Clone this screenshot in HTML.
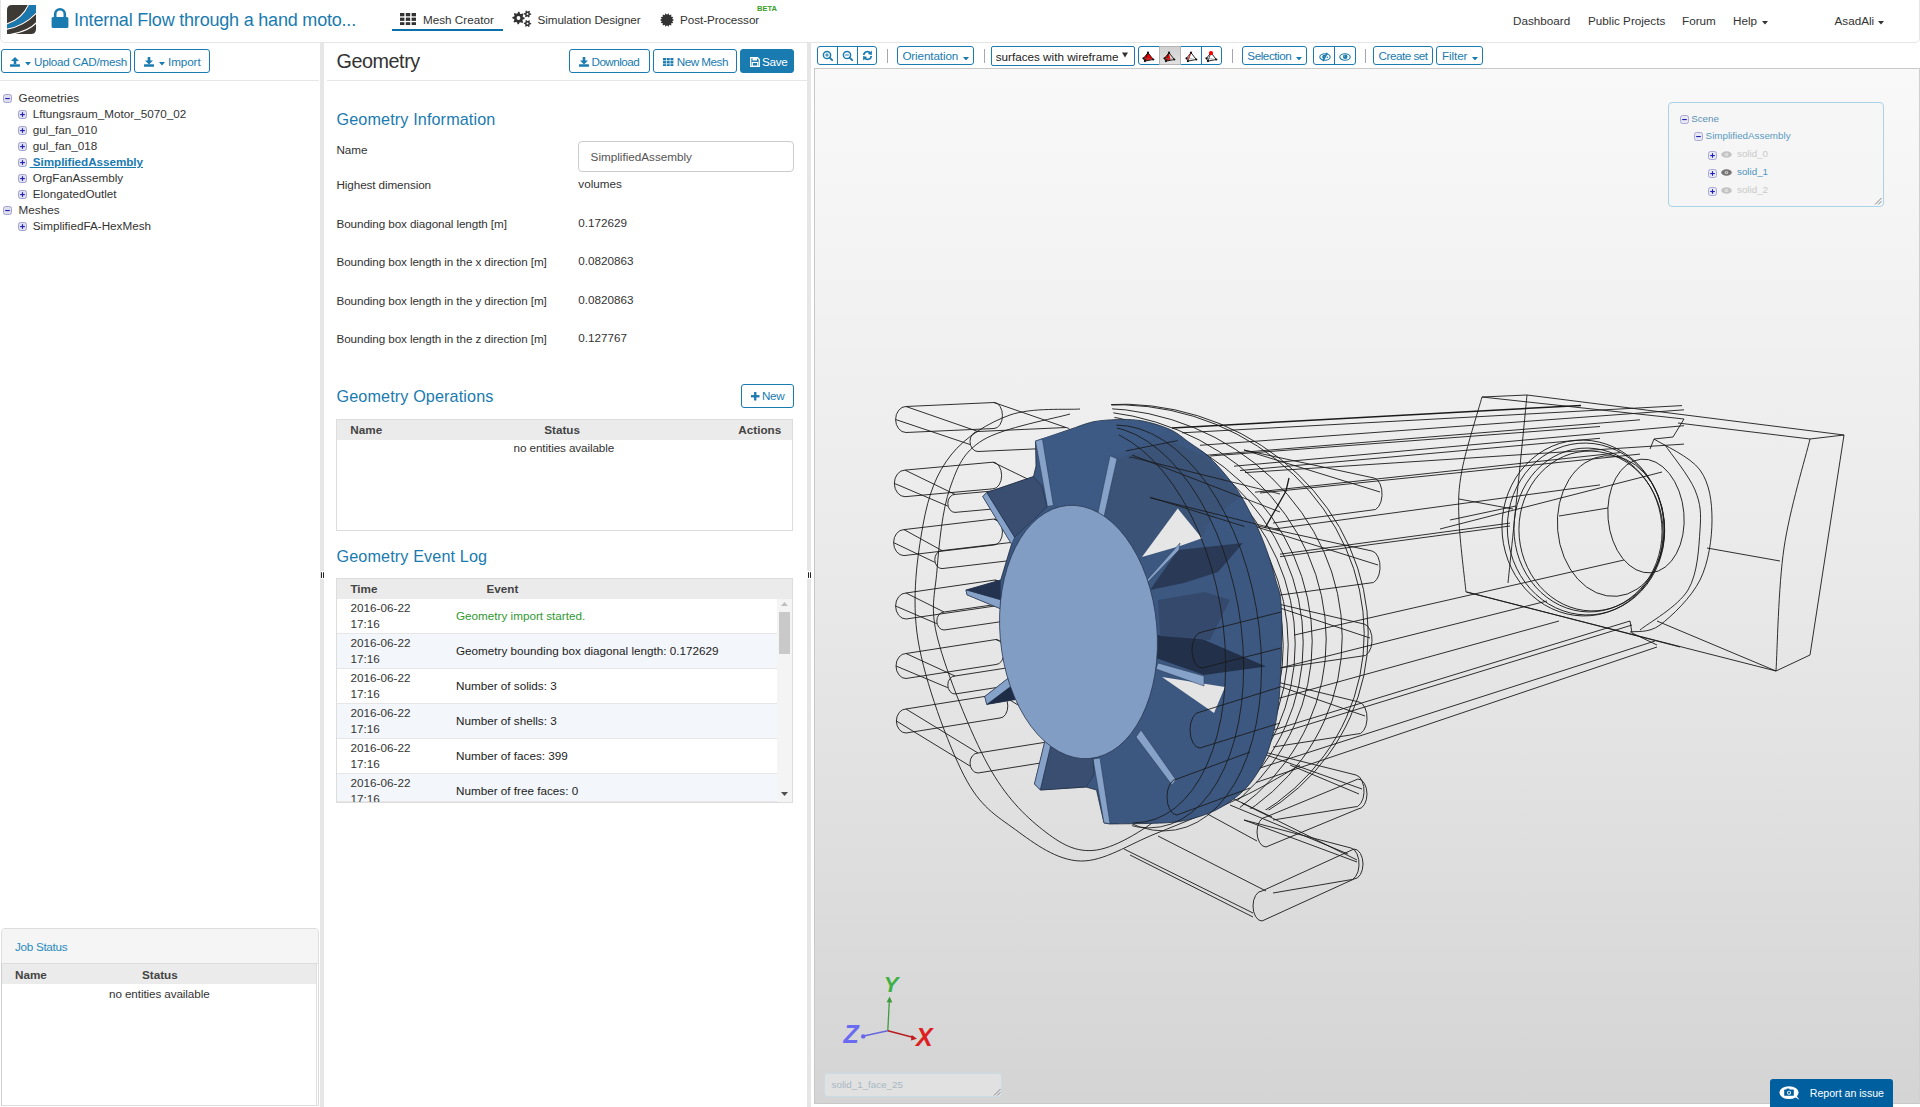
<!DOCTYPE html>
<html><head><meta charset="utf-8">
<style>
*{box-sizing:border-box;margin:0;padding:0}
html,body{width:1920px;height:1107px;overflow:hidden;background:#fff;font-family:"Liberation Sans",sans-serif;color:#333}
.a{position:absolute;white-space:nowrap}
</style></head><body>
<div class="a" style="left:0px;top:0px;width:1920px;height:43px;background:#fff;border:1px solid #e5e5e5;border-top:none;border-radius:0 0 5px 5px;"></div>
<svg class="a" style="left:7px;top:5px;" width="29" height="29" viewBox="0 0 29 29"><defs><clipPath id="lc"><path d="M5,0 H29 V24 Q29,29 24,29 H0 V5 Q0,0 5,0Z"/></clipPath></defs>
<g clip-path="url(#lc)"><rect width="29" height="29" fill="#3d3935"/>
<path d="M22,0 L29,0 L29,7.5 Q16,21 0,23.5 L0,19.5 C8,17 17,11 22,0Z" fill="#1a78ae"/>
<path d="M21.6,-0.5 C16.6,10.6 7.6,16.6 -0.5,19.1" stroke="#fff" stroke-width="1.1" fill="none"/>
<path d="M29.5,8 Q16.4,21.6 -0.5,24.2" stroke="#fff" stroke-width="1.1" fill="none"/>
<path d="M29.5,17.5 Q22,26 3,29.5" stroke="#fff" stroke-width="1.2" fill="none"/>
</g></svg>
<svg class="a" style="left:51px;top:7px;" width="18" height="22" viewBox="0 0 18 22"><path d="M4.2,10.5 V7 A4.8,4.8 0 0 1 13.8,7 V10.5" stroke="#1a7bb0" stroke-width="2.6" fill="none"/>
<rect x="0.6" y="10" width="16.8" height="11" rx="1.5" fill="#1a7bb0"/></svg>
<span class="a" style="left:74px;top:10.76px;font-size:18px;line-height:18px;color:#1a7bb0;letter-spacing:-0.2px;">Internal Flow through a hand moto...</span>
<svg class="a" style="left:400px;top:12.8px;" width="16" height="12.5" viewBox="0 0 16 12.5"><rect x="0" y="0" width="4.4" height="3.3" fill="#333"/><rect x="0" y="4.6" width="4.4" height="3.3" fill="#333"/><rect x="0" y="9.2" width="4.4" height="3.3" fill="#333"/><rect x="5.8" y="0" width="4.4" height="3.3" fill="#333"/><rect x="5.8" y="4.6" width="4.4" height="3.3" fill="#333"/><rect x="5.8" y="9.2" width="4.4" height="3.3" fill="#333"/><rect x="11.6" y="0" width="4.4" height="3.3" fill="#333"/><rect x="11.6" y="4.6" width="4.4" height="3.3" fill="#333"/><rect x="11.6" y="9.2" width="4.4" height="3.3" fill="#333"/></svg>
<span class="a" style="left:423px;top:14.10px;font-size:11.7px;line-height:11.7px;color:#333;">Mesh Creator</span>
<div class="a" style="left:392px;top:29px;width:111px;height:2px;background:#0b6fa8;"></div>
<svg class="a" style="left:512px;top:10px;" width="20" height="18" viewBox="0 0 20 18"><polygon points="12.69,7.70 12.63,8.91 10.83,9.55 10.45,10.36 11.09,12.16 10.19,12.98 8.47,12.16 7.62,12.46 6.80,14.19 5.59,14.13 4.95,12.33 4.14,11.95 2.34,12.59 1.52,11.69 2.34,9.97 2.04,9.12 0.31,8.30 0.37,7.09 2.17,6.45 2.55,5.64 1.91,3.84 2.81,3.02 4.53,3.84 5.38,3.54 6.20,1.81 7.41,1.87 8.05,3.67 8.86,4.05 10.66,3.41 11.48,4.31 10.66,6.03 10.96,6.88" fill="#333"/><circle cx="6.5" cy="8" r="1.9" fill="#fff"/><polygon points="19.19,3.76 19.13,4.72 17.74,5.11 17.38,5.65 17.56,7.08 16.69,7.50 15.66,6.49 15.01,6.45 13.86,7.32 13.06,6.78 13.42,5.39 13.13,4.80 11.81,4.24 11.87,3.28 13.26,2.89 13.62,2.35 13.44,0.92 14.31,0.50 15.34,1.51 15.99,1.55 17.14,0.68 17.94,1.22 17.58,2.61 17.87,3.20" fill="#333"/><circle cx="15.5" cy="4" r="1.0" fill="#fff"/><polygon points="19.19,13.26 19.13,14.22 17.74,14.61 17.38,15.15 17.56,16.58 16.69,17.00 15.66,15.99 15.01,15.95 13.86,16.82 13.06,16.28 13.42,14.89 13.13,14.30 11.81,13.74 11.87,12.78 13.26,12.39 13.62,11.85 13.44,10.42 14.31,10.00 15.34,11.01 15.99,11.05 17.14,10.18 17.94,10.72 17.58,12.11 17.87,12.70" fill="#333"/><circle cx="15.5" cy="13.5" r="1.0" fill="#fff"/></svg>
<span class="a" style="left:537.5px;top:14.10px;font-size:11.7px;line-height:11.7px;color:#333;letter-spacing:-0.08px;">Simulation Designer</span>
<svg class="a" style="left:659.5px;top:12.5px;" width="14" height="14" viewBox="0 0 14 14"><polygon points="14.00,7.00 12.17,8.18 13.31,10.04 11.14,10.30 11.36,12.47 9.30,11.78 8.56,13.82 7.00,12.30 5.44,13.82 4.70,11.78 2.64,12.47 2.86,10.30 0.69,10.04 1.83,8.18 0.00,7.00 1.83,5.82 0.69,3.96 2.86,3.70 2.64,1.53 4.70,2.22 5.44,0.18 7.00,1.70 8.56,0.18 9.30,2.22 11.36,1.53 11.14,3.70 13.31,3.96 12.17,5.82" fill="#333"/></svg>
<span class="a" style="left:680px;top:14.10px;font-size:11.7px;line-height:11.7px;color:#333;letter-spacing:-0.05px;">Post-Processor</span>
<span class="a" style="left:757px;top:4.57px;font-size:7.6px;line-height:7.6px;color:#3aa12a;font-weight:700;">BETA</span>
<span class="a" style="left:1513px;top:15.10px;font-size:11.7px;line-height:11.7px;color:#333;">Dashboard</span>
<span class="a" style="left:1588px;top:15.10px;font-size:11.7px;line-height:11.7px;color:#333;">Public Projects</span>
<span class="a" style="left:1682px;top:15.10px;font-size:11.7px;line-height:11.7px;color:#333;">Forum</span>
<span class="a" style="left:1733px;top:15.10px;font-size:11.7px;line-height:11.7px;color:#333;">Help</span>
<svg class="a" style="left:1761.5px;top:21px;" width="6" height="3.5" viewBox="0 0 6 3.5"><polygon points="0,0 6,0 3,3.5" fill="#333"/></svg>
<span class="a" style="left:1834.5px;top:15.10px;font-size:11.7px;line-height:11.7px;color:#333;">AsadAli</span>
<svg class="a" style="left:1878px;top:21px;" width="6" height="3.5" viewBox="0 0 6 3.5"><polygon points="0,0 6,0 3,3.5" fill="#333"/></svg>
<div class="a" style="left:1px;top:49px;width:130px;height:24px;border:1px solid #1a7bb0;border-radius:3px;background:#fff;"></div>
<svg class="a" style="left:10px;top:57px;" width="10" height="10" viewBox="0 0 10 10"><path d="M5,0 L9,4 H6.3 V7 H3.7 V4 H1Z" fill="#1a7bb0"/><rect x="0" y="7.2" width="10" height="2.6" rx="0.5" fill="#1a7bb0"/></svg>
<svg class="a" style="left:25px;top:62px;" width="6" height="3.5" viewBox="0 0 6 3.5"><polygon points="0,0 6,0 3,3.5" fill="#1a7bb0"/></svg>
<span class="a" style="left:34px;top:56.10px;font-size:11.7px;line-height:11.7px;color:#1a7bb0;letter-spacing:-0.25px;">Upload CAD/mesh</span>
<div class="a" style="left:134px;top:49px;width:76px;height:24px;border:1px solid #1a7bb0;border-radius:3px;background:#fff;"></div>
<svg class="a" style="left:144px;top:57px;" width="10" height="10" viewBox="0 0 10 10"><path d="M3.7,0 H6.3 V3.5 H9 L5,7.5 L1,3.5 H3.7Z" fill="#1a7bb0"/><rect x="0" y="7.2" width="10" height="2.6" rx="0.5" fill="#1a7bb0"/></svg>
<svg class="a" style="left:159px;top:62px;" width="6" height="3.5" viewBox="0 0 6 3.5"><polygon points="0,0 6,0 3,3.5" fill="#1a7bb0"/></svg>
<span class="a" style="left:168px;top:56.10px;font-size:11.7px;line-height:11.7px;color:#1a7bb0;letter-spacing:-0.1px;">Import</span>
<div class="a" style="left:0px;top:80px;width:319px;height:1px;background:#e6e6e6;"></div>
<div class="a" style="left:320px;top:43px;width:4px;height:1064px;background:#e6e6e6;"></div>
<svg class="a" style="left:3px;top:94.2px;" width="9" height="9" viewBox="0 0 9 9"><rect x="0.5" y="0.5" width="8" height="8" rx="2" fill="#dedef0" stroke="#a3a3d0" stroke-width="1"/><rect x="2.2" y="4" width="4.6" height="1.1" fill="#1f1fb8"/></svg>
<span class="a" style="left:18.6px;top:92.10px;font-size:11.7px;line-height:11.7px;color:#333;">Geometries</span>
<svg class="a" style="left:17.5px;top:110.2px;" width="9" height="9" viewBox="0 0 9 9"><rect x="0.5" y="0.5" width="8" height="8" rx="2" fill="#dedef0" stroke="#a3a3d0" stroke-width="1"/><rect x="2.2" y="4" width="4.6" height="1.1" fill="#1f1fb8"/><rect x="3.95" y="2.2" width="1.1" height="4.6" fill="#1f1fb8"/></svg>
<span class="a" style="left:32.8px;top:108.10px;font-size:11.7px;line-height:11.7px;color:#333;">Lftungsraum_Motor_5070_02</span>
<svg class="a" style="left:17.5px;top:126.2px;" width="9" height="9" viewBox="0 0 9 9"><rect x="0.5" y="0.5" width="8" height="8" rx="2" fill="#dedef0" stroke="#a3a3d0" stroke-width="1"/><rect x="2.2" y="4" width="4.6" height="1.1" fill="#1f1fb8"/><rect x="3.95" y="2.2" width="1.1" height="4.6" fill="#1f1fb8"/></svg>
<span class="a" style="left:32.8px;top:124.10px;font-size:11.7px;line-height:11.7px;color:#333;">gul_fan_010</span>
<svg class="a" style="left:17.5px;top:142.2px;" width="9" height="9" viewBox="0 0 9 9"><rect x="0.5" y="0.5" width="8" height="8" rx="2" fill="#dedef0" stroke="#a3a3d0" stroke-width="1"/><rect x="2.2" y="4" width="4.6" height="1.1" fill="#1f1fb8"/><rect x="3.95" y="2.2" width="1.1" height="4.6" fill="#1f1fb8"/></svg>
<span class="a" style="left:32.8px;top:140.10px;font-size:11.7px;line-height:11.7px;color:#333;">gul_fan_018</span>
<svg class="a" style="left:17.5px;top:158.2px;" width="9" height="9" viewBox="0 0 9 9"><rect x="0.5" y="0.5" width="8" height="8" rx="2" fill="#dedef0" stroke="#a3a3d0" stroke-width="1"/><rect x="2.2" y="4" width="4.6" height="1.1" fill="#1f1fb8"/><rect x="3.95" y="2.2" width="1.1" height="4.6" fill="#1f1fb8"/></svg>
<span class="a" style="left:29.6px;top:156.10px;font-size:11.7px;line-height:11.7px;color:#1a7bb0;font-weight:700;letter-spacing:-0.05px;text-decoration:underline;">&nbsp;SimplifiedAssembly</span>
<svg class="a" style="left:17.5px;top:174.2px;" width="9" height="9" viewBox="0 0 9 9"><rect x="0.5" y="0.5" width="8" height="8" rx="2" fill="#dedef0" stroke="#a3a3d0" stroke-width="1"/><rect x="2.2" y="4" width="4.6" height="1.1" fill="#1f1fb8"/><rect x="3.95" y="2.2" width="1.1" height="4.6" fill="#1f1fb8"/></svg>
<span class="a" style="left:32.8px;top:172.10px;font-size:11.7px;line-height:11.7px;color:#333;">OrgFanAssembly</span>
<svg class="a" style="left:17.5px;top:190.2px;" width="9" height="9" viewBox="0 0 9 9"><rect x="0.5" y="0.5" width="8" height="8" rx="2" fill="#dedef0" stroke="#a3a3d0" stroke-width="1"/><rect x="2.2" y="4" width="4.6" height="1.1" fill="#1f1fb8"/><rect x="3.95" y="2.2" width="1.1" height="4.6" fill="#1f1fb8"/></svg>
<span class="a" style="left:32.8px;top:188.10px;font-size:11.7px;line-height:11.7px;color:#333;">ElongatedOutlet</span>
<svg class="a" style="left:3px;top:206.2px;" width="9" height="9" viewBox="0 0 9 9"><rect x="0.5" y="0.5" width="8" height="8" rx="2" fill="#dedef0" stroke="#a3a3d0" stroke-width="1"/><rect x="2.2" y="4" width="4.6" height="1.1" fill="#1f1fb8"/></svg>
<span class="a" style="left:18.6px;top:204.10px;font-size:11.7px;line-height:11.7px;color:#333;">Meshes</span>
<svg class="a" style="left:17.5px;top:222.2px;" width="9" height="9" viewBox="0 0 9 9"><rect x="0.5" y="0.5" width="8" height="8" rx="2" fill="#dedef0" stroke="#a3a3d0" stroke-width="1"/><rect x="2.2" y="4" width="4.6" height="1.1" fill="#1f1fb8"/><rect x="3.95" y="2.2" width="1.1" height="4.6" fill="#1f1fb8"/></svg>
<span class="a" style="left:32.8px;top:220.10px;font-size:11.7px;line-height:11.7px;color:#333;">SimplifiedFA-HexMesh</span>
<div class="a" style="left:1px;top:928px;width:318px;height:178px;border:1px solid #ddd;border-radius:4px 4px 0 0;background:#fff;"></div>
<div class="a" style="left:2px;top:929px;width:316px;height:34px;background:#f5f5f5;border-radius:3px 3px 0 0;"></div>
<div class="a" style="left:2px;top:963px;width:316px;height:1px;background:#dcdcdc;"></div>
<div class="a" style="left:1px;top:964px;width:1px;height:142px;background:#cfcfcf;"></div>
<div class="a" style="left:2px;top:964px;width:315px;height:20px;background:#ebebeb;"></div>
<div class="a" style="left:316px;top:964px;width:1px;height:142px;background:#e0e0e0;"></div>
<span class="a" style="left:15px;top:941.10px;font-size:11.7px;line-height:11.7px;color:#2a8bc0;letter-spacing:-0.3px;">Job Status</span>
<span class="a" style="left:15px;top:969.10px;font-size:11.7px;line-height:11.7px;color:#444;font-weight:700;">Name</span>
<span class="a" style="left:142px;top:969.10px;font-size:11.7px;line-height:11.7px;color:#444;font-weight:700;">Status</span>
<span class="a" style="left:109px;top:987.60px;font-size:11.7px;line-height:11.7px;color:#333;letter-spacing:-0.1px;">no entities available</span>
<div class="a" style="left:807px;top:43px;width:4px;height:1064px;background:#e6e6e6;"></div>
<div class="a" style="left:327px;top:80px;width:480px;height:1px;background:#e6e6e6;"></div>
<span class="a" style="left:336.5px;top:52.14px;font-size:19.8px;line-height:19.8px;color:#333;letter-spacing:-0.45px;">Geometry</span>
<div class="a" style="left:569px;top:49px;width:81px;height:24px;border:1px solid #1a7bb0;border-radius:3px;background:#fff;"></div>
<svg class="a" style="left:579px;top:57px;" width="10" height="10" viewBox="0 0 10 10"><path d="M3.7,0 H6.3 V3.5 H9 L5,7.5 L1,3.5 H3.7Z" fill="#1a7bb0"/><rect x="0" y="7.2" width="10" height="2.6" rx="0.5" fill="#1a7bb0"/></svg>
<span class="a" style="left:591.5px;top:56.10px;font-size:11.7px;line-height:11.7px;color:#1a7bb0;letter-spacing:-0.55px;">Download</span>
<div class="a" style="left:653px;top:49px;width:84px;height:24px;border:1px solid #1a7bb0;border-radius:3px;background:#fff;"></div>
<svg class="a" style="left:663px;top:57.5px;" width="10.5" height="8.7" viewBox="0 0 10.5 8.7"><rect x="0" y="0" width="3" height="2.4" fill="#1a7bb0"/><rect x="0" y="3.1" width="3" height="2.4" fill="#1a7bb0"/><rect x="0" y="6.2" width="3" height="2.4" fill="#1a7bb0"/><rect x="3.7" y="0" width="3" height="2.4" fill="#1a7bb0"/><rect x="3.7" y="3.1" width="3" height="2.4" fill="#1a7bb0"/><rect x="3.7" y="6.2" width="3" height="2.4" fill="#1a7bb0"/><rect x="7.4" y="0" width="3" height="2.4" fill="#1a7bb0"/><rect x="7.4" y="3.1" width="3" height="2.4" fill="#1a7bb0"/><rect x="7.4" y="6.2" width="3" height="2.4" fill="#1a7bb0"/></svg>
<span class="a" style="left:676.7px;top:56.10px;font-size:11.7px;line-height:11.7px;color:#1a7bb0;letter-spacing:-0.5px;">New Mesh</span>
<div class="a" style="left:740px;top:49px;width:54px;height:24px;border:1px solid #1a7bb0;border-radius:3px;background:#1a7bb0;"></div>
<svg class="a" style="left:749.5px;top:57px;" width="10" height="10" viewBox="0 0 10 10"><path d="M0.7,0.7 H7.5 L9.3,2.5 V9.3 H0.7Z" fill="none" stroke="#fff" stroke-width="1.3"/><rect x="2.5" y="0.7" width="4.5" height="2.8" fill="#fff"/><rect x="2.3" y="5.5" width="5.4" height="3.8" fill="none" stroke="#fff" stroke-width="1.1"/></svg>
<span class="a" style="left:762px;top:56.10px;font-size:11.7px;line-height:11.7px;color:#fff;letter-spacing:-0.3px;">Save</span>
<span class="a" style="left:336.5px;top:111.29px;font-size:16.2px;line-height:16.2px;color:#1a7bb0;letter-spacing:0.12px;">Geometry Information</span>
<span class="a" style="left:336.5px;top:143.90px;font-size:11.7px;line-height:11.7px;color:#333;letter-spacing:-0.1px;">Name</span>
<span class="a" style="left:336.5px;top:179.10px;font-size:11.7px;line-height:11.7px;color:#333;letter-spacing:-0.1px;">Highest dimension</span>
<span class="a" style="left:336.5px;top:217.60px;font-size:11.7px;line-height:11.7px;color:#333;letter-spacing:-0.1px;">Bounding box diagonal length [m]</span>
<span class="a" style="left:336.5px;top:255.80px;font-size:11.7px;line-height:11.7px;color:#333;letter-spacing:-0.1px;">Bounding box length in the x direction [m]</span>
<span class="a" style="left:336.5px;top:294.60px;font-size:11.7px;line-height:11.7px;color:#333;letter-spacing:-0.1px;">Bounding box length in the y direction [m]</span>
<span class="a" style="left:336.5px;top:332.80px;font-size:11.7px;line-height:11.7px;color:#333;letter-spacing:-0.1px;">Bounding box length in the z direction [m]</span>
<div class="a" style="left:578px;top:141px;width:216px;height:31px;border:1px solid #ccc;border-radius:4px;background:#fff;"></div>
<span class="a" style="left:590.6px;top:151.10px;font-size:11.7px;line-height:11.7px;color:#555;">SimplifiedAssembly</span>
<span class="a" style="left:578.3px;top:177.80px;font-size:11.7px;line-height:11.7px;color:#333;">volumes</span>
<span class="a" style="left:578.3px;top:216.70px;font-size:11.7px;line-height:11.7px;color:#333;">0.172629</span>
<span class="a" style="left:578.3px;top:255.10px;font-size:11.7px;line-height:11.7px;color:#333;">0.0820863</span>
<span class="a" style="left:578.3px;top:293.60px;font-size:11.7px;line-height:11.7px;color:#333;">0.0820863</span>
<span class="a" style="left:578.3px;top:331.90px;font-size:11.7px;line-height:11.7px;color:#333;">0.127767</span>
<span class="a" style="left:336.5px;top:387.79px;font-size:16.2px;line-height:16.2px;color:#1a7bb0;letter-spacing:0.12px;">Geometry Operations</span>
<div class="a" style="left:741px;top:384px;width:53px;height:24px;border:1px solid #1a7bb0;border-radius:3px;background:#fff;"></div>
<svg class="a" style="left:751px;top:392px;" width="8.5" height="8.5" viewBox="0 0 8.5 8.5"><rect x="3.1" y="0" width="2.3" height="8.5" fill="#1a7bb0"/><rect x="0" y="3.1" width="8.5" height="2.3" fill="#1a7bb0"/></svg>
<span class="a" style="left:762px;top:390.10px;font-size:11.7px;line-height:11.7px;color:#1a7bb0;letter-spacing:-0.4px;">New</span>
<div class="a" style="left:336px;top:419px;width:457px;height:112px;border:1px solid #ddd;background:#fff;"></div>
<div class="a" style="left:337px;top:420px;width:455px;height:20px;background:#ebebeb;"></div>
<span class="a" style="left:350.3px;top:424.40px;font-size:11.7px;line-height:11.7px;color:#444;font-weight:700;">Name</span>
<span class="a" style="left:544.2px;top:424.40px;font-size:11.7px;line-height:11.7px;color:#444;font-weight:700;">Status</span>
<span class="a" style="left:738.3px;top:424.40px;font-size:11.7px;line-height:11.7px;color:#444;font-weight:700;">Actions</span>
<span class="a" style="left:513.6px;top:442.30px;font-size:11.7px;line-height:11.7px;color:#333;letter-spacing:-0.1px;">no entities available</span>
<span class="a" style="left:336.5px;top:547.79px;font-size:16.2px;line-height:16.2px;color:#1a7bb0;letter-spacing:0.12px;">Geometry Event Log</span>
<div class="a" style="left:336px;top:578px;width:457px;height:225px;border:1px solid #ddd;background:#fff;"></div>
<div class="a" style="left:337px;top:579px;width:455px;height:20px;background:#ebebeb;"></div>
<span class="a" style="left:350.4px;top:583.40px;font-size:11.7px;line-height:11.7px;color:#444;font-weight:700;">Time</span>
<span class="a" style="left:486.5px;top:583.40px;font-size:11.7px;line-height:11.7px;color:#444;font-weight:700;">Event</span>
<div class="a" style="left:337px;top:599px;width:440px;height:203px;overflow:hidden;"><div class="a" style="left:0px;top:0px;width:440px;height:35px;background:#fff;border-bottom:1px solid #e6e6e6;"></div><span class="a" style="left:13.6px;top:3.10px;font-size:11.7px;line-height:11.7px;color:#333;">2016-06-22</span><span class="a" style="left:13.6px;top:18.80px;font-size:11.7px;line-height:11.7px;color:#333;">17:16</span><span class="a" style="left:119px;top:11.10px;font-size:11.7px;line-height:11.7px;color:#2f9a2f;">Geometry import started.</span><div class="a" style="left:0px;top:35px;width:440px;height:35px;background:#f3f6fa;border-bottom:1px solid #e6e6e6;"></div><span class="a" style="left:13.6px;top:38.10px;font-size:11.7px;line-height:11.7px;color:#333;">2016-06-22</span><span class="a" style="left:13.6px;top:53.80px;font-size:11.7px;line-height:11.7px;color:#333;">17:16</span><span class="a" style="left:119px;top:46.10px;font-size:11.7px;line-height:11.7px;color:#222;">Geometry bounding box diagonal length: 0.172629</span><div class="a" style="left:0px;top:70px;width:440px;height:35px;background:#fff;border-bottom:1px solid #e6e6e6;"></div><span class="a" style="left:13.6px;top:73.10px;font-size:11.7px;line-height:11.7px;color:#333;">2016-06-22</span><span class="a" style="left:13.6px;top:88.80px;font-size:11.7px;line-height:11.7px;color:#333;">17:16</span><span class="a" style="left:119px;top:81.10px;font-size:11.7px;line-height:11.7px;color:#222;">Number of solids: 3</span><div class="a" style="left:0px;top:105px;width:440px;height:35px;background:#f3f6fa;border-bottom:1px solid #e6e6e6;"></div><span class="a" style="left:13.6px;top:108.10px;font-size:11.7px;line-height:11.7px;color:#333;">2016-06-22</span><span class="a" style="left:13.6px;top:123.80px;font-size:11.7px;line-height:11.7px;color:#333;">17:16</span><span class="a" style="left:119px;top:116.10px;font-size:11.7px;line-height:11.7px;color:#222;">Number of shells: 3</span><div class="a" style="left:0px;top:140px;width:440px;height:35px;background:#fff;border-bottom:1px solid #e6e6e6;"></div><span class="a" style="left:13.6px;top:143.10px;font-size:11.7px;line-height:11.7px;color:#333;">2016-06-22</span><span class="a" style="left:13.6px;top:158.80px;font-size:11.7px;line-height:11.7px;color:#333;">17:16</span><span class="a" style="left:119px;top:151.10px;font-size:11.7px;line-height:11.7px;color:#222;">Number of faces: 399</span><div class="a" style="left:0px;top:175px;width:440px;height:28px;background:#f3f6fa;border-bottom:1px solid #e6e6e6;"></div><span class="a" style="left:13.6px;top:178.10px;font-size:11.7px;line-height:11.7px;color:#333;">2016-06-22</span><span class="a" style="left:13.6px;top:193.80px;font-size:11.7px;line-height:11.7px;color:#333;">17:16</span><span class="a" style="left:119px;top:186.10px;font-size:11.7px;line-height:11.7px;color:#222;">Number of free faces: 0</span></div>
<div class="a" style="left:777px;top:599px;width:15px;height:203px;background:rgba(235,235,235,0.55);"></div>
<svg class="a" style="left:780px;top:601px;" width="9" height="6" viewBox="0 0 9 6"><polygon points="1,5 4.5,1 8,5" fill="#bdbdbd"/></svg>
<div class="a" style="left:779px;top:612px;width:11px;height:42px;background:#c9c9c9;"></div>
<svg class="a" style="left:780px;top:791px;" width="9" height="6" viewBox="0 0 9 6"><polygon points="1,1 4.5,5 8,1" fill="#505050"/></svg>
<div class="a" style="left:320.5px;top:571px;width:4px;height:7.5px;background:#fff;"></div>
<div class="a" style="left:321px;top:572px;width:1.1px;height:6px;background:#222;border-radius:1px;"></div>
<div class="a" style="left:323.1px;top:572px;width:1.1px;height:6px;background:#222;border-radius:1px;"></div>
<div class="a" style="left:807.4px;top:571px;width:4px;height:7.5px;background:#fff;"></div>
<div class="a" style="left:807.9px;top:572px;width:1.1px;height:6px;background:#222;border-radius:1px;"></div>
<div class="a" style="left:810.0px;top:572px;width:1.1px;height:6px;background:#222;border-radius:1px;"></div>
<div class="a" style="left:814px;top:68px;width:1106px;height:1036px;border:1px solid #c8c8c8;border-right:1px solid #d0d0d0;background:linear-gradient(180deg,#f9f9f9 0%,#e9e9e9 50%,#d4d4d4 100%);"></div>
<svg class="a" style="left:0;top:0" width="1920" height="1107" viewBox="0 0 1920 1107"><defs><clipPath id="vc"><rect x="815" y="69" width="1104" height="1034"/></clipPath><clipPath id="wc2"><polygon points="1105,380 1900,380 1900,900 1330,815 1240,808 1178,640 1162,520 1120,440"/></clipPath><clipPath id="wc"><polygon points="1105,380 1900,380 1900,950 1100,950 1130,830 1160,760 1178,640 1162,520 1120,440"/></clipPath></defs><g clip-path="url(#vc)"><path d="M906.0,406.5 L994.0,402.5 A8.450000000000001,13 0 0 1 994.0,428.5 L906.0,432.5 A10.4,13 0 0 1 906.0,406.5Z" fill="none" stroke="#1a1a1a" stroke-width="0.9"/><path d="M978.0,431.5 L1066.0,427.5 A6.5,10 0 0 1 1066.0,447.5 L978.0,451.5 A8.0,10 0 0 1 978.0,431.5Z" fill="none" stroke="#1a1a1a" stroke-width="0.9"/><line x1="906" y1="406.5" x2="978" y2="431.5" stroke="#1a1a1a" stroke-width="0.9" stroke-opacity="1"/><line x1="895.6" y1="419.5" x2="970.0" y2="444.5" stroke="#1a1a1a" stroke-width="0.9" stroke-opacity="1"/><line x1="994" y1="402.5" x2="1066" y2="427.5" stroke="#1a1a1a" stroke-width="0.9" stroke-opacity="1"/><path d="M905.0,470.1 L993.0,462.2 A8.645000000000001,13.3 0 0 1 993.0,488.8 L905.0,496.7 A10.64,13.3 0 0 1 905.0,470.1Z" fill="none" stroke="#1a1a1a" stroke-width="0.9"/><path d="M955.0,494.4 L1043.0,486.5 A5.8500000000000005,9 0 0 1 1043.0,504.5 L955.0,512.4 A7.2,9 0 0 1 955.0,494.4Z" fill="none" stroke="#1a1a1a" stroke-width="0.9"/><line x1="905" y1="470.09999999999997" x2="955" y2="494.4" stroke="#1a1a1a" stroke-width="0.9" stroke-opacity="1"/><line x1="894.36" y1="483.4" x2="947.8" y2="506.09999999999997" stroke="#1a1a1a" stroke-width="0.9" stroke-opacity="1"/><line x1="993" y1="462.2" x2="1043" y2="486.5" stroke="#1a1a1a" stroke-width="0.9" stroke-opacity="1"/><path d="M904.0,529.6 L994.0,519.0 A8.450000000000001,13 0 0 1 994.0,545.0 L904.0,555.6 A10.4,13 0 0 1 904.0,529.6Z" fill="none" stroke="#1a1a1a" stroke-width="0.9"/><path d="M942.0,550.6 L1032.0,540.0 A5.8500000000000005,9 0 0 1 1032.0,558.0 L942.0,568.6 A7.2,9 0 0 1 942.0,550.6Z" fill="none" stroke="#1a1a1a" stroke-width="0.9"/><line x1="904" y1="529.6" x2="942" y2="550.6" stroke="#1a1a1a" stroke-width="0.9" stroke-opacity="1"/><line x1="893.6" y1="542.6" x2="934.8" y2="562.3000000000001" stroke="#1a1a1a" stroke-width="0.9" stroke-opacity="1"/><line x1="994" y1="519" x2="1032" y2="540" stroke="#1a1a1a" stroke-width="0.9" stroke-opacity="1"/><path d="M906.0,593.0 L995.0,580.0 A8.450000000000001,13 0 0 1 995.0,606.0 L906.0,619.0 A10.4,13 0 0 1 906.0,593.0Z" fill="none" stroke="#1a1a1a" stroke-width="0.9"/><path d="M944.0,612.0 L1033.0,599.0 A5.8500000000000005,9 0 0 1 1033.0,617.0 L944.0,630.0 A7.2,9 0 0 1 944.0,612.0Z" fill="none" stroke="#1a1a1a" stroke-width="0.9"/><line x1="906" y1="593" x2="944" y2="612" stroke="#1a1a1a" stroke-width="0.9" stroke-opacity="1"/><line x1="895.6" y1="606" x2="936.8" y2="623.7" stroke="#1a1a1a" stroke-width="0.9" stroke-opacity="1"/><line x1="995" y1="580" x2="1033" y2="599" stroke="#1a1a1a" stroke-width="0.9" stroke-opacity="1"/><path d="M906.0,653.5 L996.0,639.5 A8.125,12.5 0 0 1 996.0,664.5 L906.0,678.5 A10.0,12.5 0 0 1 906.0,653.5Z" fill="none" stroke="#1a1a1a" stroke-width="0.9"/><path d="M955.0,676.0 L1045.0,662.0 A5.8500000000000005,9 0 0 1 1045.0,680.0 L955.0,694.0 A7.2,9 0 0 1 955.0,676.0Z" fill="none" stroke="#1a1a1a" stroke-width="0.9"/><line x1="906" y1="653.5" x2="955" y2="676" stroke="#1a1a1a" stroke-width="0.9" stroke-opacity="1"/><line x1="896.0" y1="666" x2="947.8" y2="687.7" stroke="#1a1a1a" stroke-width="0.9" stroke-opacity="1"/><line x1="996" y1="639.5" x2="1045" y2="662" stroke="#1a1a1a" stroke-width="0.9" stroke-opacity="1"/><path d="M906.0,709.0 L1000.0,694.0 A7.800000000000001,12 0 0 1 1000.0,718.0 L906.0,733.0 A9.600000000000001,12 0 0 1 906.0,709.0Z" fill="none" stroke="#1a1a1a" stroke-width="0.9"/><path d="M978.0,753.0 L1072.0,738.0 A6.5,10 0 0 1 1072.0,758.0 L978.0,773.0 A8.0,10 0 0 1 978.0,753.0Z" fill="none" stroke="#1a1a1a" stroke-width="0.9"/><line x1="906" y1="709" x2="978" y2="753" stroke="#1a1a1a" stroke-width="0.9" stroke-opacity="1"/><line x1="896.4" y1="721" x2="970.0" y2="766.0" stroke="#1a1a1a" stroke-width="0.9" stroke-opacity="1"/><line x1="1000" y1="694" x2="1072" y2="738" stroke="#1a1a1a" stroke-width="0.9" stroke-opacity="1"/><path d="M1080.0,409.0 C1068.3,410.0 1031.5,407.3 1010.0,415.0 C988.5,422.7 965.5,436.7 951.0,455.0 C936.5,473.3 928.5,494.2 923.0,525.0 C917.5,555.8 911.2,598.2 918.0,640.0 C924.8,681.8 947.8,743.9 964.0,775.5 C980.2,807.1 996.1,815.5 1015.5,829.7 C1034.9,844.0 1057.1,860.4 1080.5,861.0 C1103.9,861.6 1128.8,844.3 1156.0,833.5 C1183.2,822.7 1220.0,807.4 1244.0,796.0 C1268.0,784.6 1290.7,770.2 1300.0,765.0" fill="none" stroke="#1a1a1a" stroke-width="0.9" stroke-opacity="1"/><path d="M1070.0,414.0 C1055.5,418.3 1003.0,427.7 983.0,440.0 C963.0,452.3 957.7,466.3 950.0,488.0 C942.3,509.7 939.0,544.7 937.0,570.0 C935.0,595.3 929.5,607.5 938.0,640.0 C946.5,672.5 970.6,733.4 988.0,765.0 C1005.4,796.6 1024.5,815.5 1042.6,829.7 C1060.7,843.9 1075.9,853.1 1096.8,850.0 C1117.7,846.9 1147.6,827.7 1168.0,811.0 C1188.4,794.3 1205.3,768.5 1219.0,750.0 C1232.7,731.5 1244.8,708.3 1250.0,700.0" fill="none" stroke="#1a1a1a" stroke-width="0.9" stroke-opacity="1"/><path d="M1262.0,891.0 L1354.0,849.0 A9,15 0 0 1 1354.0,879.0 L1262.0,921.0 A9,15 0 0 1 1262.0,891.0Z" fill="none" stroke="#1a1a1a" stroke-width="0.9"/><line x1="1253" y1="913" x2="1124" y2="849" stroke="#1a1a1a" stroke-width="0.9" stroke-opacity="1"/><line x1="1253" y1="917" x2="1130" y2="855" stroke="#1a1a1a" stroke-width="0.9" stroke-opacity="1"/><line x1="1266" y1="891" x2="1158" y2="836" stroke="#1a1a1a" stroke-width="0.9" stroke-opacity="1"/><line x1="1357" y1="860" x2="1242" y2="803" stroke="#1a1a1a" stroke-width="0.9" stroke-opacity="1"/><line x1="1348" y1="854" x2="1230" y2="805" stroke="#1a1a1a" stroke-width="0.9" stroke-opacity="1"/><path d="M1266.0,817.0 L1358.0,779.0 A9,15 0 0 1 1358.0,809.0 L1266.0,847.0 A9,15 0 0 1 1266.0,817.0Z" fill="none" stroke="#1a1a1a" stroke-width="0.9"/><line x1="1257" y1="841" x2="1202" y2="811" stroke="#1a1a1a" stroke-width="0.9" stroke-opacity="1"/><line x1="1272" y1="817" x2="1215" y2="790" stroke="#1a1a1a" stroke-width="0.9" stroke-opacity="1"/><line x1="1359" y1="794" x2="1290" y2="765" stroke="#1a1a1a" stroke-width="0.9" stroke-opacity="1"/><g clip-path="url(#wc)"><line x1="1172" y1="428.0" x2="1581" y2="405.4" stroke="#1a1a1a" stroke-width="1.5" stroke-opacity="1"/><line x1="1182" y1="432.8" x2="1682" y2="405.6" stroke="#1a1a1a" stroke-width="0.9" stroke-opacity="1"/><line x1="1200" y1="445.3" x2="1684" y2="409.8" stroke="#1a1a1a" stroke-width="0.9" stroke-opacity="1"/><line x1="1203" y1="455.5" x2="1640" y2="419.8" stroke="#1a1a1a" stroke-width="0.9" stroke-opacity="1"/><line x1="1210" y1="456.0" x2="1600" y2="426.5" stroke="#1a1a1a" stroke-width="0.9" stroke-opacity="1"/><line x1="1234" y1="466.2" x2="1684" y2="425.7" stroke="#1a1a1a" stroke-width="0.9" stroke-opacity="1"/><line x1="1240" y1="470.5" x2="1600" y2="438.3" stroke="#1a1a1a" stroke-width="0.9" stroke-opacity="1"/><line x1="1245" y1="472.6" x2="1684" y2="444.1" stroke="#1a1a1a" stroke-width="0.9" stroke-opacity="1"/><line x1="1255" y1="492.2" x2="1620" y2="452.6" stroke="#1a1a1a" stroke-width="0.9" stroke-opacity="1"/><line x1="1260" y1="493.0" x2="1640" y2="454.1" stroke="#1a1a1a" stroke-width="0.9" stroke-opacity="1"/><line x1="1275" y1="528.9" x2="1600" y2="484.9" stroke="#1a1a1a" stroke-width="0.9" stroke-opacity="1"/><line x1="1280" y1="554.2" x2="1510" y2="523.1" stroke="#1a1a1a" stroke-width="0.9" stroke-opacity="1"/><line x1="1280" y1="556.7" x2="1510" y2="526.0" stroke="#1a1a1a" stroke-width="0.9" stroke-opacity="1"/><line x1="1294" y1="635.1" x2="1624" y2="560.0" stroke="#1a1a1a" stroke-width="0.9" stroke-opacity="1"/><line x1="1240" y1="678.0" x2="1547" y2="601.0" stroke="#1a1a1a" stroke-width="0.9" stroke-opacity="1"/><line x1="1240" y1="709.0" x2="1559" y2="621.0" stroke="#1a1a1a" stroke-width="0.9" stroke-opacity="1"/><line x1="1240" y1="740.2" x2="1630" y2="621.0" stroke="#1a1a1a" stroke-width="0.9" stroke-opacity="1"/><line x1="1240" y1="745.3" x2="1632" y2="625.0" stroke="#1a1a1a" stroke-width="0.9" stroke-opacity="1"/><line x1="1251" y1="770.9" x2="1655" y2="641.0" stroke="#1a1a1a" stroke-width="0.9" stroke-opacity="1"/><line x1="1256" y1="782.5" x2="1657" y2="647.0" stroke="#1a1a1a" stroke-width="0.9" stroke-opacity="1"/><line x1="1459" y1="499" x2="1513" y2="509" stroke="#1a1a1a" stroke-width="0.9" stroke-opacity="1"/><line x1="1244" y1="450" x2="1374" y2="478" stroke="#1a1a1a" stroke-width="0.9" stroke-opacity="1"/><path d="M1374,478 A9,16 0 0 1 1372,510" fill="none" stroke="#1a1a1a" stroke-width="0.9"/><line x1="1273" y1="523" x2="1372" y2="510" stroke="#1a1a1a" stroke-width="0.9" stroke-opacity="1"/><line x1="1244" y1="450" x2="1380" y2="492" stroke="#1a1a1a" stroke-width="0.9" stroke-opacity="1"/><line x1="1244" y1="523" x2="1372" y2="551" stroke="#1a1a1a" stroke-width="0.9" stroke-opacity="1"/><path d="M1372,551 A9,16 0 0 1 1370,583" fill="none" stroke="#1a1a1a" stroke-width="0.9"/><line x1="1273" y1="596" x2="1370" y2="583" stroke="#1a1a1a" stroke-width="0.9" stroke-opacity="1"/><line x1="1244" y1="523" x2="1378" y2="565" stroke="#1a1a1a" stroke-width="0.9" stroke-opacity="1"/><line x1="1244" y1="596" x2="1364" y2="624" stroke="#1a1a1a" stroke-width="0.9" stroke-opacity="1"/><path d="M1364,624 A9,16 0 0 1 1362,656" fill="none" stroke="#1a1a1a" stroke-width="0.9"/><line x1="1273" y1="669" x2="1362" y2="656" stroke="#1a1a1a" stroke-width="0.9" stroke-opacity="1"/><line x1="1244" y1="596" x2="1370" y2="638" stroke="#1a1a1a" stroke-width="0.9" stroke-opacity="1"/><line x1="1244" y1="674" x2="1359" y2="702" stroke="#1a1a1a" stroke-width="0.9" stroke-opacity="1"/><path d="M1359,702 A9,16 0 0 1 1357,734" fill="none" stroke="#1a1a1a" stroke-width="0.9"/><line x1="1273" y1="747" x2="1357" y2="734" stroke="#1a1a1a" stroke-width="0.9" stroke-opacity="1"/><line x1="1244" y1="674" x2="1365" y2="716" stroke="#1a1a1a" stroke-width="0.9" stroke-opacity="1"/><line x1="1244" y1="747" x2="1356" y2="775" stroke="#1a1a1a" stroke-width="0.9" stroke-opacity="1"/><path d="M1356,775 A9,16 0 0 1 1354,807" fill="none" stroke="#1a1a1a" stroke-width="0.9"/><line x1="1273" y1="820" x2="1354" y2="807" stroke="#1a1a1a" stroke-width="0.9" stroke-opacity="1"/><line x1="1244" y1="747" x2="1362" y2="789" stroke="#1a1a1a" stroke-width="0.9" stroke-opacity="1"/><line x1="1244" y1="820" x2="1351" y2="848" stroke="#1a1a1a" stroke-width="0.9" stroke-opacity="1"/><path d="M1351,848 A9,16 0 0 1 1349,880" fill="none" stroke="#1a1a1a" stroke-width="0.9"/><line x1="1273" y1="893" x2="1349" y2="880" stroke="#1a1a1a" stroke-width="0.9" stroke-opacity="1"/><line x1="1244" y1="820" x2="1357" y2="862" stroke="#1a1a1a" stroke-width="0.9" stroke-opacity="1"/><path d="M1482.0,397.0 C1478.7,409.2 1465.8,449.5 1462.0,470.0 C1458.2,490.5 1458.3,499.7 1459.0,520.0 C1459.7,540.3 1464.8,580.0 1466.0,592.0" fill="none" stroke="#1a1a1a" stroke-width="0.9" stroke-opacity="1"/><polyline points="1482.0,397.0 1527.0,395.0 1844.0,435.0 1810.0,655.0 1776.0,671.0 1657.0,621.0" fill="none" stroke="#1a1a1a" stroke-width="0.9" stroke-opacity="1"/><path d="M1527.0,395.0 C1525.8,406.8 1523.2,434.7 1520.0,466.0 C1516.8,497.3 1510.0,563.5 1508.0,583.0" fill="none" stroke="#1a1a1a" stroke-width="0.9" stroke-opacity="1"/><line x1="1482" y1="397" x2="1684" y2="419" stroke="#1a1a1a" stroke-width="0.9" stroke-opacity="1"/><polyline points="1678.0,423.0 1810.0,439.0 1844.0,435.0" fill="none" stroke="#1a1a1a" stroke-width="0.9" stroke-opacity="1"/><path d="M1810.0,439.0 C1805.7,457.2 1789.7,509.3 1784.0,548.0 C1778.3,586.7 1777.3,650.5 1776.0,671.0" fill="none" stroke="#1a1a1a" stroke-width="0.9" stroke-opacity="1"/><line x1="1707" y1="548" x2="1780" y2="561" stroke="#1a1a1a" stroke-width="0.9" stroke-opacity="1"/><line x1="1466" y1="592" x2="1776" y2="671" stroke="#1a1a1a" stroke-width="0.9" stroke-opacity="1"/><polyline points="1684.0,419.0 1673.0,437.0 1654.0,439.0 1650.0,449.0" fill="none" stroke="#1a1a1a" stroke-width="0.9" stroke-opacity="1"/><polyline points="1630.0,621.0 1632.0,633.0 1657.0,645.0" fill="none" stroke="#1a1a1a" stroke-width="0.9" stroke-opacity="1"/><ellipse cx="1586" cy="529" rx="78.6" ry="86" transform="rotate(-5 1586 529)" fill="none" stroke="#1a1a1a" stroke-width="0.9" stroke-opacity="1"/><ellipse cx="1588" cy="530" rx="74" ry="82" transform="rotate(-5 1588 530)" fill="none" stroke="#1a1a1a" stroke-width="0.9" stroke-opacity="1"/><ellipse cx="1591" cy="531" rx="72" ry="80" transform="rotate(-5 1591 531)" fill="none" stroke="#1a1a1a" stroke-width="0.9" stroke-opacity="1"/><ellipse cx="1583" cy="528" rx="81" ry="88" transform="rotate(-5 1583 528)" fill="none" stroke="#1a1a1a" stroke-width="0.9" stroke-opacity="1"/><ellipse cx="1611" cy="526" rx="53.5" ry="70.5" transform="rotate(-5 1611 526)" fill="none" stroke="#1a1a1a" stroke-width="0.9" stroke-opacity="1"/><ellipse cx="1646" cy="516" rx="38" ry="57" transform="rotate(-5 1646 516)" fill="none" stroke="#1a1a1a" stroke-width="0.9" stroke-opacity="1"/><path d="M1654.0,439.0 C1661.7,444.2 1690.3,456.5 1700.0,470.0 C1709.7,483.5 1712.0,501.7 1712.0,520.0 C1712.0,538.3 1708.7,562.5 1700.0,580.0 C1691.3,597.5 1671.7,616.3 1660.0,625.0 C1648.3,633.7 1635.0,630.8 1630.0,632.0" fill="none" stroke="#1a1a1a" stroke-width="0.9" stroke-opacity="1"/><path d="M1665.0,445.0 C1670.0,452.5 1689.2,475.8 1695.0,490.0 C1700.8,504.2 1701.2,513.3 1700.0,530.0 C1698.8,546.7 1698.0,573.3 1688.0,590.0 C1678.0,606.7 1648.0,623.3 1640.0,630.0" fill="none" stroke="#1a1a1a" stroke-width="0.9" stroke-opacity="1"/><line x1="1440" y1="529" x2="1662" y2="472" stroke="#1a1a1a" stroke-width="0.9" stroke-opacity="1"/><line x1="1559" y1="516" x2="1608" y2="508" stroke="#1a1a1a" stroke-width="0.9" stroke-opacity="1"/><line x1="1450" y1="520" x2="1516" y2="506" stroke="#1a1a1a" stroke-width="0.9" stroke-opacity="1"/></g><g clip-path="url(#wc2)"><ellipse cx="1044" cy="638.8" rx="240" ry="221" transform="rotate(12 1044 638.8)" fill="none" stroke="#1a1a1a" stroke-width="0.85" stroke-opacity="1"/><ellipse cx="1049" cy="638.0" rx="240" ry="221" transform="rotate(12 1049 638.0)" fill="none" stroke="#1a1a1a" stroke-width="0.85" stroke-opacity="1"/><ellipse cx="1056" cy="637.0" rx="240" ry="221" transform="rotate(12 1056 637.0)" fill="none" stroke="#1a1a1a" stroke-width="0.85" stroke-opacity="1"/><ellipse cx="1064" cy="635.8" rx="240" ry="221" transform="rotate(12 1064 635.8)" fill="none" stroke="#1a1a1a" stroke-width="0.85" stroke-opacity="1"/><ellipse cx="1073" cy="634.4" rx="240" ry="221" transform="rotate(12 1073 634.4)" fill="none" stroke="#1a1a1a" stroke-width="0.85" stroke-opacity="1"/><ellipse cx="1087" cy="632.3" rx="240" ry="221" transform="rotate(12 1087 632.3)" fill="none" stroke="#1a1a1a" stroke-width="0.85" stroke-opacity="1"/><ellipse cx="1103" cy="629.9" rx="240" ry="221" transform="rotate(12 1103 629.9)" fill="none" stroke="#1a1a1a" stroke-width="0.85" stroke-opacity="1"/><ellipse cx="1125" cy="626.6" rx="240" ry="221" transform="rotate(12 1125 626.6)" fill="none" stroke="#1a1a1a" stroke-width="0.85" stroke-opacity="1"/><ellipse cx="1129" cy="626.0" rx="240" ry="221" transform="rotate(12 1129 626.0)" fill="none" stroke="#1a1a1a" stroke-width="0.85" stroke-opacity="1"/></g><path d="M1035.5,441 L1042,439 L1074,428 C1078.0,426.8 1087.7,422.3 1098.0,421.0 C1108.3,419.7 1124.2,418.7 1136.0,420.0 C1147.8,421.3 1160.0,425.2 1169.0,429.0 C1178.0,432.8 1183.5,438.5 1190.0,443.0 C1196.5,447.5 1201.9,450.5 1208.0,456.0 C1214.1,461.5 1221.0,469.3 1226.5,476.0 C1232.0,482.7 1235.9,487.6 1241.0,496.0 C1246.1,504.4 1252.5,516.8 1257.0,526.5 C1261.5,536.2 1264.8,544.9 1268.0,554.0 C1271.2,563.1 1273.9,573.3 1276.0,581.0 C1278.1,588.7 1279.8,589.9 1280.7,600.0 C1281.7,610.1 1282.1,624.2 1281.7,641.5 C1281.3,658.8 1280.5,686.8 1278.6,704.0 C1276.6,721.2 1273.4,733.7 1270.0,745.0 C1266.6,756.3 1262.8,764.0 1258.0,772.0 C1253.2,780.0 1248.0,786.7 1241.0,793.0 C1234.0,799.3 1225.0,805.5 1216.0,810.0 C1207.0,814.5 1196.0,817.8 1187.0,820.0 C1178.0,822.2 1174.8,822.3 1162.0,823.0 C1149.2,823.7 1118.7,823.8 1110.0,824.0 L1104,823 L1096.5,790 L1086,787 L1040.4,790 L1034.5,784 L1046.4,735 L1014.6,683.6 L1021.6,698.5 L986.8,704.4 L984.8,696.5 L1011.6,675.6 L1000.7,608.8 L967,594.8 L966,590 L1000.7,580 L1011.6,544 L982.8,496.5 L986.8,492.5 L1033.5,476.6 L1036,466Z" fill="#3c5880" stroke="#1d2a3e" stroke-width="0.8"/><polygon points="1040,439 1098,421 1136,420 1169,429 1150,440 1112,456 1097,517 1053,505" fill="#3d5a84" stroke="none" stroke-width="0.8" /><polygon points="1117,459 1170,441 1206,457 1240,497 1210,520 1202,538 1177.7,508.4 1145,560 1103,521" fill="#3a5377" stroke="none" stroke-width="0.8" /><polygon points="1177.7,508.4 1202,538.2 1180,546 1142,557" fill="#e6e6e6" stroke="none" stroke-width="0.8" /><polygon points="1162,677 1225,687 1214,713" fill="#e4e4e4" stroke="none" stroke-width="0.8" /><polygon points="1156,635 1200,638 1266,666.5 1204,675 1156,658" fill="#22304a" stroke="none" stroke-width="0.8" /><polygon points="1178,550 1243,543 1218,572 1184,583 1150,590" fill="#2a3a56" stroke="none" stroke-width="0.8" /><polygon points="1158,600 1205,592 1230,600 1210,640 1160,636" fill="#34496b" stroke="none" stroke-width="0.8" /><polygon points="1035.5,441 1042.4,439 1053.4,505.4 1047.4,506.4" fill="#86a2c8" stroke="#24324a" stroke-width="0.5" /><polygon points="1110,455.8 1117,458.7 1103,521.3 1097,517.4" fill="#86a2c8" stroke="#24324a" stroke-width="0.5" /><polygon points="982.8,496.5 986.8,492.5 1014.6,537.2 1011.6,544.2" fill="#86a2c8" stroke="#24324a" stroke-width="0.5" /><polygon points="965.9,589.9 1000.7,599.8 1000.7,608.8 967,594.8" fill="#86a2c8" stroke="#24324a" stroke-width="0.5" /><polygon points="984.8,696.5 1011.6,675.6 1014.6,683.6 986.8,704.4" fill="#86a2c8" stroke="#24324a" stroke-width="0.5" /><polygon points="1034.5,783.9 1046.4,735.2 1052.4,740.2 1040.4,789.9" fill="#86a2c8" stroke="#24324a" stroke-width="0.5" /><polygon points="1104,822.7 1093,759 1100,758 1110,823.7" fill="#86a2c8" stroke="#24324a" stroke-width="0.5" /><polygon points="1136,737 1141,730 1176,780 1172,785" fill="#86a2c8" stroke="#24324a" stroke-width="0.5" /><polygon points="1156,669 1158,663 1204,676 1204,686" fill="#86a2c8" stroke="#24324a" stroke-width="0.5" /><polygon points="1144,586 1147,580 1180,543 1179,550" fill="#86a2c8" stroke="#24324a" stroke-width="0.5" /><polygon points="986.8,492.5 1033.5,476.6 1042,486 1047,507 1014.6,537.2" fill="#394e70" stroke="#1d2a3e" stroke-width="0.5" /><polygon points="966,590 1000.7,580 1000.7,600" fill="#243350" stroke="none" stroke-width="0.8" /><polygon points="986.8,704.4 1021.6,698.5 1014.6,683.6" fill="#1f2c45" stroke="none" stroke-width="0.8" /><polygon points="1040.4,790 1086,787 1094,775 1093,759 1052,740" fill="#394e70" stroke="#1d2a3e" stroke-width="0.5" /><ellipse cx="1078.5" cy="632" rx="78.5" ry="127" transform="rotate(-5 1078.5 632)" fill="#819dc4" stroke="#2a3a55" stroke-width="0.8"/><g clip-path="url(#wc)"><ellipse cx="1110" cy="625" rx="112" ry="200" transform="rotate(-10 1110 625)" fill="none" stroke="#1a1a1a" stroke-width="0.8" stroke-opacity="1"/><ellipse cx="1125" cy="627" rx="115" ry="203" transform="rotate(-10 1125 627)" fill="none" stroke="#1a1a1a" stroke-width="0.8" stroke-opacity="1"/><ellipse cx="1140" cy="628" rx="118" ry="205" transform="rotate(-10 1140 628)" fill="none" stroke="#1a1a1a" stroke-width="0.8" stroke-opacity="1"/><line x1="1467" y1="592" x2="1680" y2="647" stroke="#1a1a1a" stroke-width="0.9" stroke-opacity="1"/><polyline points="1289.0,478.0 1286.0,491.0 1265.0,528.0" fill="none" stroke="#1a1a1a" stroke-width="1.3" stroke-opacity="1"/><path d="M1131,457 L1280,494 M1131,493 L1280,530 M1131,457 A10,18 0 0 0 1131,493" fill="none" stroke="#1a1a1a" stroke-width="0.85"/><path d="M1202,632 L1281,612 M1202,668 L1281,648 M1202,632 A10,18 0 0 0 1202,668" fill="none" stroke="#1a1a1a" stroke-width="0.85"/><path d="M1200,712 L1280,687 M1200,748 L1280,723 M1200,712 A10,18 0 0 0 1200,748" fill="none" stroke="#1a1a1a" stroke-width="0.85"/><path d="M1177,779 L1250,752 M1177,815 L1250,788 M1177,779 A10,18 0 0 0 1177,815" fill="none" stroke="#1a1a1a" stroke-width="0.85"/><line x1="1110.8" y1="454" x2="1177.7" y2="440.6" stroke="#1a1a1a" stroke-width="0.85" stroke-opacity="1"/><line x1="1139.7" y1="494" x2="1244.5" y2="526.5" stroke="#1a1a1a" stroke-width="0.85" stroke-opacity="1"/><line x1="1132" y1="455" x2="1280" y2="512" stroke="#1a1a1a" stroke-width="0.85" stroke-opacity="1"/></g></g></svg>
<div class="a" style="left:817px;top:46px;width:60px;height:19px;border:1px solid #1a7bb0;border-radius:3px;background:#fff;overflow:hidden;"></div><div class="a" style="left:837px;top:46px;width:1px;height:19px;background:#1a7bb0;"></div><div class="a" style="left:857px;top:46px;width:1px;height:19px;background:#1a7bb0;"></div>
<svg class="a" style="left:822px;top:50px;" width="11" height="11" viewBox="0 0 11 11"><circle cx="5" cy="5" r="3.6" fill="none" stroke="#1a7bb0" stroke-width="1.5"/><line x1="7.6" y1="7.6" x2="10.2" y2="10.2" stroke="#1a7bb0" stroke-width="1.8" stroke-linecap="round"/><line x1="3.2" y1="5" x2="6.8" y2="5" stroke="#1a7bb0" stroke-width="1"/><line x1="5" y1="3.2" x2="5" y2="6.8" stroke="#1a7bb0" stroke-width="1"/></svg>
<svg class="a" style="left:842px;top:50px;" width="11" height="11" viewBox="0 0 11 11"><circle cx="5" cy="5" r="3.6" fill="none" stroke="#1a7bb0" stroke-width="1.5"/><line x1="7.6" y1="7.6" x2="10.2" y2="10.2" stroke="#1a7bb0" stroke-width="1.8" stroke-linecap="round"/><line x1="3.2" y1="5" x2="6.8" y2="5" stroke="#1a7bb0" stroke-width="1"/></svg>
<svg class="a" style="left:862px;top:50px;" width="11" height="11" viewBox="0 0 11 11"><path d="M1.8,5 A3.6,3.6 0 0 1 8.4,3.2" fill="none" stroke="#1a7bb0" stroke-width="1.7"/><polygon points="9.8,0.6 9.9,4.9 5.8,4.1" fill="#1a7bb0"/><path d="M9.2,6 A3.6,3.6 0 0 1 2.6,7.8" fill="none" stroke="#1a7bb0" stroke-width="1.7"/><polygon points="1.2,10.4 1.1,6.1 5.2,6.9" fill="#1a7bb0"/></svg>
<div class="a" style="left:886.5px;top:49px;width:1.3px;height:14px;background:#a9a4b4;"></div>
<div class="a" style="left:983.5px;top:49px;width:1.3px;height:14px;background:#a9a4b4;"></div>
<div class="a" style="left:1231.5px;top:49px;width:1.3px;height:14px;background:#a9a4b4;"></div>
<div class="a" style="left:1365px;top:49px;width:1.3px;height:14px;background:#a9a4b4;"></div>
<div class="a" style="left:897px;top:46px;width:77px;height:19px;border:1px solid #1a7bb0;border-radius:3px;background:#fff;overflow:hidden;"></div>
<span class="a" style="left:902.4px;top:50.10px;font-size:11.7px;line-height:11.7px;color:#1a7bb0;letter-spacing:-0.13px;">Orientation</span>
<svg class="a" style="left:962.5px;top:56.5px;" width="6" height="3.5" viewBox="0 0 6 3.5"><polygon points="0,0 6,0 3,3.5" fill="#1a7bb0"/></svg>
<div class="a" style="left:991px;top:46px;width:144px;height:20px;border:1px solid #1a7bb0;border-radius:2px;background:#fff;"></div>
<span class="a" style="left:995.7px;top:51.10px;font-size:11.7px;line-height:11.7px;color:#222;">surfaces with wireframe</span>
<svg class="a" style="left:1122px;top:52px;" width="6" height="6" viewBox="0 0 6 6"><polygon points="0,0.5 6,0.5 3,5.5" fill="#333"/></svg>
<div class="a" style="left:1138px;top:46px;width:84px;height:19px;border:1px solid #1a7bb0;border-radius:3px;background:#fff;overflow:hidden;"></div><div class="a" style="left:1201px;top:46px;width:1px;height:19px;background:#1a7bb0;"></div>
<div class="a" style="left:1159px;top:46px;width:21.5px;height:19px;background:linear-gradient(#d0d0d0,#e2e2e2);border:1px solid #b4b4b4;"></div>
<svg class="a" style="left:1138px;top:46px;" width="21" height="19" viewBox="0 0 21 19"><polygon points="10,6.7 5.5,12.3 6.9,15.1 15.3,13.5" fill="#f00000"/><polyline points="5.5,12.3 10,6.7 15.3,13.5 6.9,15.1 5.5,12.3" fill="none" stroke="#111" stroke-width="0.9"/><line x1="10" y1="6.7" x2="6.9" y2="15.1" stroke="#111" stroke-width="0.7"/><line x1="5.5" y1="12.3" x2="15.3" y2="13.5" stroke="#777" stroke-width="0.6"/><circle cx="10" cy="6.7" r="1.1" fill="#111"/><circle cx="5.5" cy="12.3" r="1.1" fill="#111"/><circle cx="6.9" cy="15.1" r="1.1" fill="#111"/><circle cx="15.3" cy="13.5" r="1.1" fill="#111"/></svg>
<svg class="a" style="left:1159.2px;top:46px;" width="21" height="19" viewBox="0 0 21 19"><polygon points="10,6.7 5.5,12.3 6.9,15.1" fill="#f00000"/><polygon points="10,6.7 6.9,15.1 11.5,14.3" fill="#f00000"/><polyline points="5.5,12.3 10,6.7 15.3,13.5 6.9,15.1 5.5,12.3" fill="none" stroke="#111" stroke-width="0.9"/><line x1="10" y1="6.7" x2="6.9" y2="15.1" stroke="#111" stroke-width="0.7"/><line x1="5.5" y1="12.3" x2="15.3" y2="13.5" stroke="#777" stroke-width="0.6"/><circle cx="10" cy="6.7" r="1.1" fill="#111"/><circle cx="5.5" cy="12.3" r="1.1" fill="#111"/><circle cx="6.9" cy="15.1" r="1.1" fill="#111"/><circle cx="15.3" cy="13.5" r="1.1" fill="#111"/></svg>
<svg class="a" style="left:1180.5px;top:46px;" width="21" height="19" viewBox="0 0 21 19"><polyline points="5.5,12.3 10,6.7 15.3,13.5 6.9,15.1 5.5,12.3" fill="none" stroke="#111" stroke-width="0.9"/><line x1="10" y1="6.7" x2="6.9" y2="15.1" stroke="#111" stroke-width="0.7"/><line x1="5.5" y1="12.3" x2="15.3" y2="13.5" stroke="#777" stroke-width="0.6"/><line x1="9.4" y1="7.5" x2="6.7" y2="14.299999999999999" stroke="#f22" stroke-width="0.9"/><circle cx="10" cy="6.7" r="1.1" fill="#111"/><circle cx="5.5" cy="12.3" r="1.1" fill="#111"/><circle cx="6.9" cy="15.1" r="1.1" fill="#111"/><circle cx="15.3" cy="13.5" r="1.1" fill="#111"/></svg>
<svg class="a" style="left:1201.4px;top:46px;" width="21" height="19" viewBox="0 0 21 19"><polyline points="5.5,12.3 10,6.7 15.3,13.5 6.9,15.1 5.5,12.3" fill="none" stroke="#111" stroke-width="0.9"/><line x1="10" y1="6.7" x2="6.9" y2="15.1" stroke="#111" stroke-width="0.7"/><line x1="5.5" y1="12.3" x2="15.3" y2="13.5" stroke="#777" stroke-width="0.6"/><circle cx="10" cy="6.7" r="1.1" fill="#111"/><circle cx="5.5" cy="12.3" r="1.1" fill="#111"/><circle cx="6.9" cy="15.1" r="1.1" fill="#111"/><circle cx="15.3" cy="13.5" r="1.1" fill="#111"/><circle cx="10" cy="7.1000000000000005" r="2.1" fill="#f00"/></svg>
<div class="a" style="left:1242px;top:46px;width:65px;height:19px;border:1px solid #1a7bb0;border-radius:3px;background:#fff;overflow:hidden;"></div>
<span class="a" style="left:1247.3px;top:50.10px;font-size:11.7px;line-height:11.7px;color:#1a7bb0;letter-spacing:-0.45px;">Selection</span>
<svg class="a" style="left:1296px;top:56.5px;" width="6" height="3.5" viewBox="0 0 6 3.5"><polygon points="0,0 6,0 3,3.5" fill="#1a7bb0"/></svg>
<div class="a" style="left:1313px;top:46px;width:43px;height:19px;border:1px solid #1a7bb0;border-radius:3px;background:#fff;overflow:hidden;"></div><div class="a" style="left:1334px;top:46px;width:1px;height:19px;background:#1a7bb0;"></div>
<svg class="a" style="left:1318.5px;top:51.5px;" width="12" height="10" viewBox="0 0 12 10"><ellipse cx="6" cy="5" rx="5.2" ry="3.3" fill="none" stroke="#1a7bb0" stroke-width="1.1"/><path d="M4.2,3 A2.3,2.3 0 0 0 4.5,7 L6.6,2.6Z" fill="#1a7bb0"/><line x1="8.2" y1="0.9" x2="4" y2="9.2" stroke="#1a7bb0" stroke-width="1.5"/><circle cx="8.3" cy="5.2" r="0.8" fill="#1a7bb0"/></svg>
<svg class="a" style="left:1339px;top:51.5px;" width="12" height="10" viewBox="0 0 12 10"><ellipse cx="6" cy="5" rx="5.2" ry="3.3" fill="none" stroke="#1a7bb0" stroke-width="1.1"/><circle cx="6.2" cy="4.8" r="2.3" fill="#1a7bb0"/><circle cx="5.3" cy="4" r="0.6" fill="#cfe3ef"/></svg>
<div class="a" style="left:1373px;top:46px;width:60px;height:19px;border:1px solid #1a7bb0;border-radius:3px;background:#fff;overflow:hidden;"></div>
<span class="a" style="left:1378.6px;top:50.10px;font-size:11.7px;line-height:11.7px;color:#1a7bb0;letter-spacing:-0.5px;">Create set</span>
<div class="a" style="left:1436px;top:46px;width:47px;height:19px;border:1px solid #1a7bb0;border-radius:3px;background:#fff;overflow:hidden;"></div>
<span class="a" style="left:1442px;top:50.10px;font-size:11.7px;line-height:11.7px;color:#1a7bb0;letter-spacing:-0.1px;">Filter</span>
<svg class="a" style="left:1472px;top:56.5px;" width="6" height="3.5" viewBox="0 0 6 3.5"><polygon points="0,0 6,0 3,3.5" fill="#1a7bb0"/></svg>
<div class="a" style="left:1668px;top:102px;width:216px;height:105px;border:1px solid #a9d3e6;border-radius:4px;background:rgba(245,245,245,0.6);"></div>
<svg class="a" style="left:1679.5px;top:114.8px;" width="9" height="9" viewBox="0 0 9 9"><rect x="0.5" y="0.5" width="8" height="8" rx="2" fill="#e8e8f4" stroke="#a9a9d6" stroke-width="1"/><rect x="2.2" y="4" width="4.6" height="1.1" fill="#1f1fb8"/></svg>
<span class="a" style="left:1691.2px;top:113.70px;font-size:9.8px;line-height:9.8px;color:#5b93b3;">Scene</span>
<svg class="a" style="left:1694px;top:131.5px;" width="9" height="9" viewBox="0 0 9 9"><rect x="0.5" y="0.5" width="8" height="8" rx="2" fill="#e8e8f4" stroke="#a9a9d6" stroke-width="1"/><rect x="2.2" y="4" width="4.6" height="1.1" fill="#1f1fb8"/></svg>
<span class="a" style="left:1705.6px;top:130.70px;font-size:9.8px;line-height:9.8px;color:#5b9ac0;">SimplifiedAssembly</span>
<svg class="a" style="left:1708px;top:150.5px;" width="9" height="9" viewBox="0 0 9 9"><rect x="0.5" y="0.5" width="8" height="8" rx="2" fill="#e8e8f4" stroke="#a9a9d6" stroke-width="1"/><rect x="2.2" y="4" width="4.6" height="1.1" fill="#1f1fb8"/><rect x="3.95" y="2.2" width="1.1" height="4.6" fill="#1f1fb8"/></svg>
<svg class="a" style="left:1721px;top:151px;" width="11" height="7" viewBox="0 0 11 7"><ellipse cx="5.5" cy="3.5" rx="5.3" ry="3.2" fill="#c4c4c4"/><circle cx="5.5" cy="3.5" r="1.6" fill="#f3f3f3"/><circle cx="5.5" cy="3.5" r="0.9" fill="#c4c4c4"/></svg>
<span class="a" style="left:1737px;top:148.70px;font-size:9.8px;line-height:9.8px;color:#c9c9c9;">solid_0</span>
<svg class="a" style="left:1708px;top:168.5px;" width="9" height="9" viewBox="0 0 9 9"><rect x="0.5" y="0.5" width="8" height="8" rx="2" fill="#e8e8f4" stroke="#a9a9d6" stroke-width="1"/><rect x="2.2" y="4" width="4.6" height="1.1" fill="#1f1fb8"/><rect x="3.95" y="2.2" width="1.1" height="4.6" fill="#1f1fb8"/></svg>
<svg class="a" style="left:1721px;top:169px;" width="11" height="7" viewBox="0 0 11 7"><ellipse cx="5.5" cy="3.5" rx="5.3" ry="3.2" fill="#777"/><circle cx="5.5" cy="3.5" r="1.6" fill="#f3f3f3"/><circle cx="5.5" cy="3.5" r="0.9" fill="#777"/></svg>
<span class="a" style="left:1737px;top:166.70px;font-size:9.8px;line-height:9.8px;color:#4d94c0;">solid_1</span>
<svg class="a" style="left:1708px;top:186.5px;" width="9" height="9" viewBox="0 0 9 9"><rect x="0.5" y="0.5" width="8" height="8" rx="2" fill="#e8e8f4" stroke="#a9a9d6" stroke-width="1"/><rect x="2.2" y="4" width="4.6" height="1.1" fill="#1f1fb8"/><rect x="3.95" y="2.2" width="1.1" height="4.6" fill="#1f1fb8"/></svg>
<svg class="a" style="left:1721px;top:187px;" width="11" height="7" viewBox="0 0 11 7"><ellipse cx="5.5" cy="3.5" rx="5.3" ry="3.2" fill="#c4c4c4"/><circle cx="5.5" cy="3.5" r="1.6" fill="#f3f3f3"/><circle cx="5.5" cy="3.5" r="0.9" fill="#c4c4c4"/></svg>
<span class="a" style="left:1737px;top:184.70px;font-size:9.8px;line-height:9.8px;color:#c9c9c9;">solid_2</span>
<svg class="a" style="left:1874px;top:197px;" width="8" height="8" viewBox="0 0 8 8"><line x1="1" y1="7.5" x2="7.5" y2="1" stroke="#555" stroke-width="0.7"/><line x1="4.2" y1="7.5" x2="7.5" y2="4.2" stroke="#555" stroke-width="0.7"/></svg>
<svg class="a" style="left:840px;top:970px;" width="100" height="80" viewBox="0 0 100 80">
<line x1="47.8" y1="60.8" x2="49.4" y2="30" stroke="#3d9a3d" stroke-width="1.3"/>
<polygon points="49.6,26.5 46.6,32.2 52.4,32.4" fill="#3d9a3d"/>
<line x1="47.8" y1="60.8" x2="23.6" y2="66" stroke="#6666dd" stroke-width="1.5"/>
<circle cx="23.2" cy="66.4" r="2.2" fill="#6666ee"/>
<line x1="47.8" y1="60.8" x2="73.5" y2="67.5" stroke="#b91c1c" stroke-width="1.5"/>
<polygon points="77,68.8 71.6,64.9 71,70.6" fill="#c41b1b"/>
<text x="43.8" y="21.5" font-family="Liberation Sans" font-weight="700" font-style="italic" font-size="22" fill="#3cb043">Y</text>
<text x="3.5" y="73" font-family="Liberation Sans" font-weight="700" font-style="italic" font-size="25" fill="#6b6bf2">Z</text>
<text x="76" y="76" font-family="Liberation Sans" font-weight="700" font-style="italic" font-size="25" fill="#dd1f1f">X</text>
</svg>
<div class="a" style="left:824px;top:1073px;width:178px;height:24px;border:1px solid #c9dbe6;border-radius:3px;background:#e1e1e1;"></div>
<span class="a" style="left:831.6px;top:1080.40px;font-size:9.8px;line-height:9.8px;color:#a7b8c4;">solid_1_face_25</span>
<svg class="a" style="left:993px;top:1088px;" width="8" height="8" viewBox="0 0 8 8"><line x1="1" y1="7.5" x2="7.5" y2="1" stroke="#666" stroke-width="0.7"/><line x1="4.2" y1="7.5" x2="7.5" y2="4.2" stroke="#666" stroke-width="0.7"/></svg>
<div class="a" style="left:1770px;top:1079px;width:123px;height:28px;background:#005f9e;border-radius:3px 3px 0 0;"></div>
<svg class="a" style="left:1778.5px;top:1086px;" width="22" height="14" viewBox="0 0 22 14"><ellipse cx="10" cy="6.6" rx="9.6" ry="6.4" fill="#fff"/><polygon points="14,10 20.5,13.8 16,8" fill="#fff"/><rect x="5.2" y="3.6" width="9.6" height="6.2" rx="0.6" fill="#005f9e"/><rect x="7.5" y="2.6" width="3" height="1.5" fill="#005f9e"/><circle cx="10" cy="6.7" r="2" fill="#fff"/><circle cx="10" cy="6.7" r="1.1" fill="#005f9e"/></svg>
<span class="a" style="left:1809.8px;top:1088.03px;font-size:10.6px;line-height:10.6px;color:#fff;">Report an issue</span>
</body></html>
